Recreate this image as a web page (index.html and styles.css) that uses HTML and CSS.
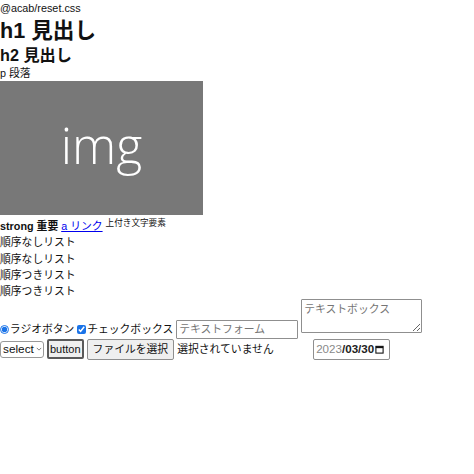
FILE: index.html
```html
<!DOCTYPE html>
<html lang="ja">
<head>
<meta charset="utf-8">
<link rel="stylesheet" href="styles.css">
</head>
<body>
<p class="title">@acab/reset.css</p>
<h1>h1 見出し</h1>
<h2>h2 見出し</h2>
<p>p 段落</p>
<div class="img"><span>img</span></div>
<p class="inline"><strong>strong 重要</strong> <a href="#">a リンク</a> <sup>上付き文字要素</sup></p>
<ul>
<li>順序なしリスト</li>
<li>順序なしリスト</li>
</ul>
<ol>
<li>順序つきリスト</li>
<li>順序つきリスト</li>
</ol>
<form class="form">
<div class="row"><label class="opt"><input type="radio" checked>ラジオボタン</label> <label class="opt"><input type="checkbox" checked>チェックボックス</label> <input class="text" type="text" placeholder="テキストフォーム"> <textarea class="area" placeholder="テキストボックス"></textarea></div>
<div class="row row2"><span class="sel">select<svg class="chev" viewBox="0 0 8 5" width="6" height="4"><path d="M1 1 L4 4 L7 1" fill="none" stroke="#555" stroke-width="1"/></svg></span><button class="btn" type="button">button</button><span class="file"><button class="filebtn" type="button">ファイルを選択</button><span class="filetxt">選択されていません</span></span><span class="date"><span class="yr">2023</span>/03/30<svg class="cal" viewBox="0 0 10 10" width="9" height="9"><rect x="1" y="1.5" width="8" height="7.5" fill="none" stroke="#111" stroke-width="1.2"/><rect x="1" y="1.5" width="8" height="2" fill="#111"/></svg></span></div>
</form>
</body>
</html>
```
FILE: styles.css
```css
* { margin: 0; padding: 0; box-sizing: border-box; }
html, body { background: #fff; }
body {
  font-family: "Liberation Sans", "Noto Sans CJK JP", sans-serif;
  font-size: 10.8px;
  line-height: 1.5;
  color: #111;
}
h1 { font-size: 21.6px; line-height: 29.6px; font-weight: 700; }
h2 { font-size: 16.2px; line-height: 19.2px; font-weight: 700; }
.img {
  width: 203px;
  height: 134px;
  background: #787878;
  display: flex;
  align-items: center;
  justify-content: center;
}
.img span {
  color: #fff;
  font-family: "Open Sans", sans-serif;
  font-weight: 300;
  font-size: 50px;
  line-height: 1;
  margin-top: -6px;
}
.inline { padding-top: 3px; }
a { color: #0000ee; text-decoration: underline; }
sup { font-size: 8.6px; vertical-align: 0.45em; line-height: 0; }
ul, ol { list-style: none; }
.row { white-space: nowrap; }
.opt input { width: 8.8px; height: 8.8px; margin: 0 1px 0 0; vertical-align: -1px; accent-color: #1a73e8; }
input, select, button, textarea { font: inherit; color: inherit; }
.text {
  width: 122px; height: 19px;
  border: 1px solid #8f8f8f;
  border-radius: 1px;
  padding: 0 2px;
}
.area {
  width: 121px; height: 34px;
  border: 1px solid #8f8f8f;
  border-radius: 1px;
  padding: 1px 2px;
  resize: both;
}
.row2 {
  display: flex;
  align-items: center;
  height: 21px;
}
.sel {
  display: inline-flex;
  align-items: center;
  gap: 2px;
  width: 44px; height: 17px;
  border: 1px solid #999;
  border-radius: 3px;
  background: #fff;
  padding: 0 1px 0 2px;
  font-size: 11.8px;
  line-height: 15px;
}
.chev { display: block; }
.btn {
  height: 20px;
  margin-left: 3px;
  padding: 0 1px;
  border: 2px solid #5a5a5a;
  background: #efefef;
  border-radius: 2px;
  font-size: 11px;
  line-height: 16px;
}
.file { display: inline-flex; align-items: center; margin-left: 3px; }
.filebtn {
  height: 21px;
  padding: 0 5px;
  border: 1px solid #8f8f8f;
  background: #efefef;
  border-radius: 2px;
  line-height: 19px;
}
.filetxt { margin-left: 3px; width: 136px; }
.date {
  display: inline-flex;
  align-items: center;
  width: 77px; height: 21px;
  border: 1px solid #8f8f8f;
  border-radius: 2px;
  padding: 0 2px;
  background: #fff;
  color: #222;
  font-size: 11.6px;
  font-weight: 700;
}
.yr { color: #8a8a8a; font-weight: 400; }
.cal { margin-left: 1px; display: block; }
```
